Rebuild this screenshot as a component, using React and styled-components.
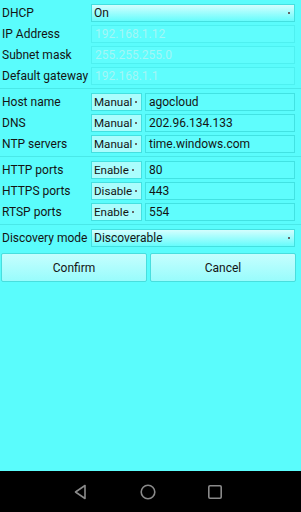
import React from 'react';
import styled, { createGlobalStyle } from 'styled-components';

const GlobalStyle = createGlobalStyle`
  html, body {
    margin: 0;
    padding: 0;
    background: #5afcfc;
  }
  * {
    box-sizing: border-box;
  }
`;

const Screen = styled.div`
  width: 301px;
  height: 512px;
  display: flex;
  flex-direction: column;
  background: #5afcfc;
  font-family: Roboto, 'Noto Sans', sans-serif;
  font-size: 12px;
  color: #141414;
`;

const Form = styled.div`
  flex: 1;
  padding: 4px 6px 0 2px;
  display: flex;
  flex-direction: column;
`;

const Section = styled.div`
  display: flex;
  flex-direction: column;
  gap: 3px;
`;

const Divider = styled.div`
  height: 1px;
  margin: 3px -6px 4px -2px;
  background: #4ae8e8;
`;

const Row = styled.div`
  display: grid;
  grid-template-columns: 86px ${(p) => (p.split ? '51px 1fr' : '1fr')};
  column-gap: 3px;
  align-items: center;
  height: 18px;
`;

const Label = styled.span`
  white-space: nowrap;
  line-height: 18px;
`;

const Field = styled.div`
  height: 18px;
  border: 1px solid ${(p) => (p.disabled ? '#4ef0f0' : '#42e2e2')};
  background: #5ffdfd;
  padding: 0 3px;
  line-height: 16px;
  color: ${(p) => (p.disabled ? '#a4f6f6' : '#141414')};
  white-space: nowrap;
  overflow: hidden;
`;

const Select = styled.div`
  height: 18px;
  border: 1px solid #44e0e0;
  background: ${(p) =>
    p.wide ? 'linear-gradient(#d4fefe, #66fcfc)' : '#aafdfd'};
  padding: 0 2px;
  font-size: ${(p) => (p.wide ? '12px' : '11.6px')};
  line-height: 16px;
  display: flex;
  align-items: center;
  justify-content: ${(p) => (p.wide ? 'space-between' : 'flex-start')};
  gap: 3px;
  white-space: nowrap;
  overflow: hidden;
`;

const Arrow = styled.span`
  width: 2px;
  height: 2px;
  background: #666;
  flex-shrink: 0;
  margin-right: ${(p) => (p.wide ? '2px' : '0')};
`;

const Buttons = styled.div`
  display: grid;
  grid-template-columns: 1fr 1fr;
  gap: 3px;
  margin: 6px -1px 0 -1px;
`;

const Button = styled.button`
  height: 29px;
  border: 1px solid #48dede;
  border-radius: 2px;
  background: linear-gradient(#c6fefe, #98fcfc);
  font-family: Roboto, 'Noto Sans', sans-serif;
  font-size: 12px;
  color: #141414;
  padding: 0;
`;

const NavBar = styled.div`
  height: 41px;
  background: #000;
  display: flex;
  align-items: center;
  justify-content: center;
  gap: 49px;
  padding-right: 6px;
`;

const NavIcon = styled.svg`
  width: 18px;
  height: 18px;
  stroke: #8a8a8a;
  stroke-width: 1.6;
  fill: none;
`;

const SelectBox = ({ value, wide }) => (
  <Select wide={wide}>
    <span>{value}</span>
    <Arrow wide={wide} />
  </Select>
);

const App = () => (
  <Screen>
    <GlobalStyle />
    <Form>
      <Section>
        <Row>
          <Label>DHCP</Label>
          <SelectBox value="On" wide />
        </Row>
        <Row>
          <Label>IP Address</Label>
          <Field disabled>192.168.1.12</Field>
        </Row>
        <Row>
          <Label>Subnet mask</Label>
          <Field disabled>255.255.255.0</Field>
        </Row>
        <Row>
          <Label>Default gateway</Label>
          <Field disabled>192.168.1.1</Field>
        </Row>
      </Section>
      <Divider />
      <Section>
        <Row split>
          <Label>Host name</Label>
          <SelectBox value="Manual" />
          <Field>agocloud</Field>
        </Row>
        <Row split>
          <Label>DNS</Label>
          <SelectBox value="Manual" />
          <Field>202.96.134.133</Field>
        </Row>
        <Row split>
          <Label>NTP servers</Label>
          <SelectBox value="Manual" />
          <Field>time.windows.com</Field>
        </Row>
      </Section>
      <Divider />
      <Section>
        <Row split>
          <Label>HTTP ports</Label>
          <SelectBox value="Enable" />
          <Field>80</Field>
        </Row>
        <Row split>
          <Label>HTTPS ports</Label>
          <SelectBox value="Disable" />
          <Field>443</Field>
        </Row>
        <Row split>
          <Label>RTSP ports</Label>
          <SelectBox value="Enable" />
          <Field>554</Field>
        </Row>
      </Section>
      <Divider />
      <Section>
        <Row>
          <Label>Discovery mode</Label>
          <SelectBox value="Discoverable" wide />
        </Row>
      </Section>
      <Buttons>
        <Button type="button">Confirm</Button>
        <Button type="button">Cancel</Button>
      </Buttons>
    </Form>
    <NavBar>
      <NavIcon viewBox="0 0 18 18">
        <path d="M13 2.5 L13 15.5 L3.5 9 Z" strokeLinejoin="round" />
      </NavIcon>
      <NavIcon viewBox="0 0 18 18">
        <circle cx="9" cy="9" r="6.8" />
      </NavIcon>
      <NavIcon viewBox="0 0 18 18">
        <rect x="2.8" y="2.8" width="12.4" height="12.4" rx="1.2" />
      </NavIcon>
    </NavBar>
  </Screen>
);

export default App;
